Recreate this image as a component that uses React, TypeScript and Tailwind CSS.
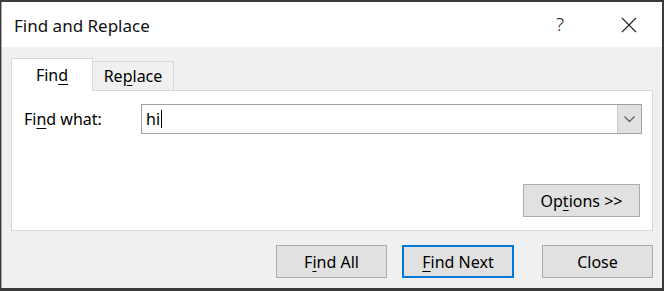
const font = { fontFamily: '"Noto Sans", "Open Sans", sans-serif' };

function Btn({ children, focused, className }: { children: React.ReactNode; focused?: boolean; className?: string }) {
    return (
        <button
            className={
                "h-[33px] bg-[#e1e1e1] text-[16px] text-black flex items-center justify-center " +
                (focused ? "border-2 border-[#0078d7]" : "border border-[#adadad]") +
                " " + (className ?? "")
            }
        >
            {children}
        </button>
    );
}

export default function App() {
    return (
        <div className="w-[664px] h-[291px] bg-[#3a3a3a] pt-[2px] pl-[1px] pr-[2px] pb-[3px]" style={font}>
            <div className="h-full flex flex-col border-l border-[#a8a8a8]">
                <div className="h-[45px] bg-white flex items-center">
                    <span className="pl-[12px] pt-[2px] text-[17px] text-[#111] flex-1">Find and Replace</span>
                    <span className="text-[19px] text-[#222] w-[20px] text-center mr-[51px] font-light">?</span>
                    <svg width="16" height="16" viewBox="0 0 16 16" className="mr-[25px]">
                        <path d="M1 1 L15 15 M15 1 L1 15" stroke="#222" strokeWidth="1.1" fill="none" />
                    </svg>
                </div>
                <div className="flex-1 bg-[#f0f0f0] pl-[9px] pr-[9px] pt-[11px]">
                    <div className="flex items-end h-[32px]">
                        <div className="w-[82px] h-[33px] bg-white border border-b-0 border-[#d9d9d9] flex items-center justify-center text-[16px] text-black relative z-10 mb-[-1px]">
                            Fin<span className="underline underline-offset-[3px]">d</span>
                        </div>
                        <div className="w-[81px] h-[29px] bg-[#f0f0f0] border border-l-0 border-b-0 border-[#d9d9d9] flex items-center justify-center text-[16px] text-black">
                            Re<span className="underline underline-offset-[3px]">p</span>lace
                        </div>
                    </div>
                    <div className="h-[141px] bg-white border border-[#d9d9d9] flex flex-col pl-[12px] pr-[10px] pt-[13px]">
                        <div className="flex items-center h-[30px]">
                            <span className="w-[117px] text-[16px] text-black">
                                Fi<span className="underline underline-offset-[3px]">n</span>d what:
                            </span>
                            <div className="flex-1 h-[30px] border border-[#a0a0a0] flex">
                                <div className="flex-1 flex items-center pl-[4px] text-[16px] text-black">
                                    hi<span className="w-[1px] h-[18px] bg-black ml-[1px]"></span>
                                </div>
                                <div className="w-[24px] bg-[#e1e1e1] border-l border-[#c8c8c8] flex items-center justify-center">
                                    <svg width="11" height="7" viewBox="0 0 11 7">
                                        <path d="M0.5 0.5 L5.5 5.5 L10.5 0.5" stroke="#606060" strokeWidth="1.3" fill="none" />
                                    </svg>
                                </div>
                            </div>
                        </div>
                        <div className="flex justify-end mt-[50px] pr-[2px]">
                            <Btn className="w-[117px] h-[32px]">
                                Op<span className="underline underline-offset-[3px]">t</span>ions &gt;&gt;
                            </Btn>
                        </div>
                    </div>
                    <div className="flex justify-end mt-[14px]">
                        <Btn className="w-[111px]">
                            F<span className="underline underline-offset-[3px]">i</span>nd All
                        </Btn>
                        <Btn focused className="w-[112px] ml-[15px]">
                            <span className="underline underline-offset-[3px]">F</span>ind Next
                        </Btn>
                        <Btn className="w-[111px] ml-[28px]">Close</Btn>
                    </div>
                </div>
            </div>
        </div>
    );
}
